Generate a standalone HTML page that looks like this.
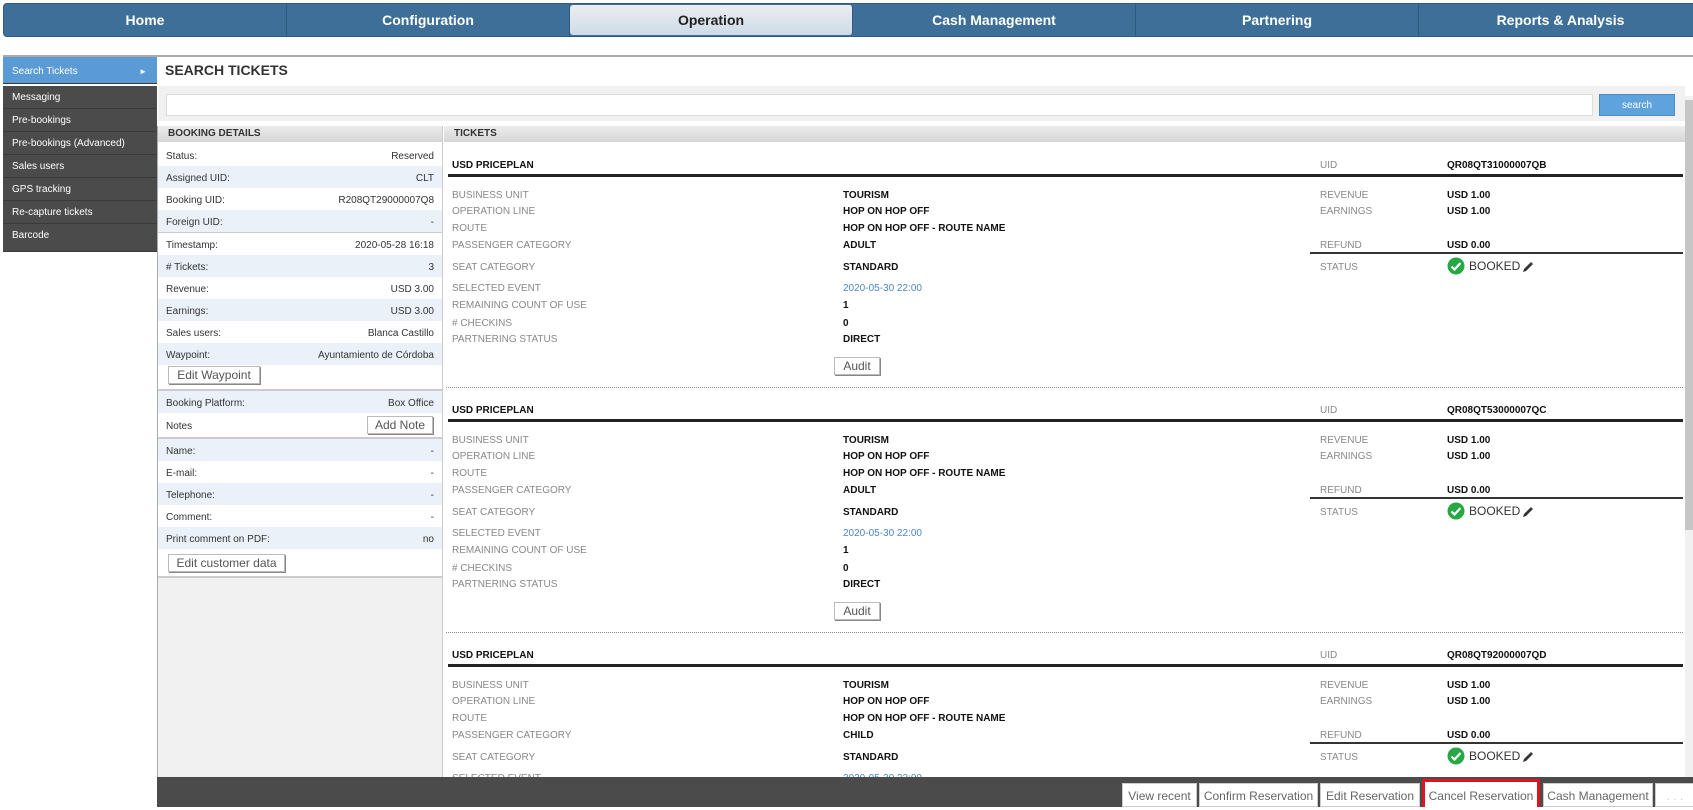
<!DOCTYPE html>
<html><head><meta charset="utf-8"><style>
*{box-sizing:border-box;margin:0;padding:0}
body{width:1693px;height:807px;overflow:hidden;background:#fff;font-family:"Liberation Sans",sans-serif;position:relative;color:#222}
.a{position:absolute;white-space:nowrap}
.nav{position:absolute;top:3px;left:3px;width:1700px;height:34px;background:#3d6f99;border-radius:4px;border:1px solid #2f5a80}
.tab{position:absolute;top:0;height:32px;line-height:32px;text-align:center;color:#fff;font-weight:bold;font-size:14px;border-right:1px solid #2f5a80}
.tab.on{background:linear-gradient(#eceef0,#ccdbe8);color:#222;border-radius:3px;top:1px;height:30px;line-height:30px}
.side{position:absolute;left:3px;width:154px;height:23px;line-height:23px;background:#4b4b4b;color:#fff;font-size:10px;padding-left:9px;border-bottom:1px solid #3a3a3a}
.br{position:absolute;left:158px;width:284px;height:22px;line-height:26px;font-size:10px;color:#333;padding:0 8px}
.br span{float:right}
.bl{background:#eaf1f8}
.btn{position:absolute;background:#fff;border:1px solid #bbb;box-shadow:1px 1px 0 #888;font-size:12px;color:#555;text-align:center}
.l{position:absolute;font-size:10px;color:#888;white-space:nowrap}
.v{position:absolute;font-size:10px;color:#111;font-weight:bold;white-space:nowrap}
.hdr{position:absolute;top:126px;height:16px;line-height:16px;background:linear-gradient(#ececec,#d6d6d6);font-size:10px;font-weight:bold;color:#333;padding-left:10px}
.fb{position:absolute;top:783px;height:24px;line-height:24px;background:#fff;font-size:12px;color:#666;text-align:center;border:1px solid #ccc}
</style></head><body>
<div class="nav">
<div class="tab" style="left:0;width:283px">Home</div>
<div class="tab" style="left:283px;width:283px">Configuration</div>
<div class="tab on" style="left:566px;width:283px">Operation</div>
<div class="tab" style="left:849px;width:283px">Cash Management</div>
<div class="tab" style="left:1132px;width:283px">Partnering</div>
<div class="tab" style="left:1415px;width:283px;border:none">Reports &amp; Analysis</div>
</div>
<div class="a" style="top:55px;left:3px;width:1690px;height:2px;background:#aaa"></div>
<div class="side" style="top:57px;height:27px;line-height:29px;background:#5b9bd5">Search Tickets<span style="position:absolute;right:10px;font-size:8px">&#9658;</span></div>
<div class="side" style="top:86px">Messaging</div>
<div class="side" style="top:109px">Pre-bookings</div>
<div class="side" style="top:132px">Pre-bookings (Advanced)</div>
<div class="side" style="top:155px">Sales users</div>
<div class="side" style="top:178px">GPS tracking</div>
<div class="side" style="top:201px">Re-capture tickets</div>
<div class="side" style="top:224px;height:28px">Barcode</div>
<div class="a" style="top:62px;left:165px;font-size:14px;font-weight:bold;color:#333">SEARCH TICKETS</div>
<div class="a" style="top:86px;left:158px;width:1527px;height:35px;background:#f1f1f1"></div>
<div class="a" style="top:94px;left:166px;width:1427px;height:22px;background:#fff;border:1px solid #ddd"></div>
<div class="a" style="top:94px;left:1599px;width:76px;height:22px;background:#5fa3dc;color:#fff;font-size:10px;text-align:center;line-height:22px;border:1px solid #4b8cc4">search</div>
<div class="a" style="top:96px;left:1685px;width:8px;height:681px;background:#f1f1f1"></div>
<div class="a" style="top:100px;left:1685px;width:8px;height:430px;background:#c6c6c6"></div>
<!-- booking panel -->
<div class="a" style="top:126px;left:157px;width:286px;height:651px;background:#f1f1f1;border-left:1px solid #aaa;border-right:1px solid #ccc"></div>
<div class="hdr" style="left:158px;width:284px">BOOKING DETAILS</div>
<div class="a" style="top:142px;left:158px;width:284px;height:436px;background:#fff;border-bottom:2px solid #ccc"></div>
<div class="br" style="top:144px">Status:<span>Reserved</span></div>
<div class="br bl" style="top:166px">Assigned UID:<span>CLT</span></div>
<div class="br" style="top:188px">Booking UID:<span>R208QT29000007Q8</span></div>
<div class="br bl" style="top:210px">Foreign UID:<span>-</span></div>
<div class="a" style="top:232px;left:158px;width:284px;height:1px;background:#ccc"></div>
<div class="br" style="top:233px">Timestamp:<span>2020-05-28 16:18</span></div>
<div class="br bl" style="top:255px"># Tickets:<span>3</span></div>
<div class="br" style="top:277px">Revenue:<span>USD 3.00</span></div>
<div class="br bl" style="top:299px">Earnings:<span>USD 3.00</span></div>
<div class="br" style="top:321px">Sales users:<span>Blanca Castillo</span></div>
<div class="br bl" style="top:343px">Waypoint:<span>Ayuntamiento de Córdoba</span></div>
<div class="btn" style="top:366px;left:168px;width:92px;height:18px;line-height:16px">Edit Waypoint</div>
<div class="a" style="top:389px;left:158px;width:284px;height:2px;background:#ccc"></div>
<div class="br bl" style="top:391px">Booking Platform:<span>Box Office</span></div>
<div class="br" style="top:413px;height:24px;line-height:28px">Notes</div>
<div class="btn" style="top:416px;left:367px;width:66px;height:18px;line-height:16px">Add Note</div>
<div class="a" style="top:437px;left:158px;width:284px;height:2px;background:#ccc"></div>
<div class="br bl" style="top:439px">Name:<span>-</span></div>
<div class="br" style="top:461px">E-mail:<span>-</span></div>
<div class="br bl" style="top:483px">Telephone:<span>-</span></div>
<div class="br" style="top:505px">Comment:<span>-</span></div>
<div class="br bl" style="top:527px">Print comment on PDF:<span>no</span></div>
<div class="btn" style="top:554px;left:168px;width:117px;height:18px;line-height:16px">Edit customer data</div>
<!-- tickets -->
<div class="hdr" style="left:444px;width:1241px">TICKETS</div>
<div class="a" style="top:777px;left:157px;width:1536px;height:30px;background:#4b4b4b"></div>
<div class="fb" style="left:1122px;width:75px">View recent</div>
<div class="fb" style="left:1199px;width:119px">Confirm Reservation</div>
<div class="fb" style="left:1320px;width:100px">Edit Reservation</div>
<div class="fb" style="left:1422px;width:118px;top:779px;height:28px;line-height:28px;border:3px solid #e0141e;border-bottom:none">Cancel Reservation</div>
<div class="fb" style="left:1543px;width:110px">Cash Management</div>
<div class="fb" style="left:1655px;width:40px;color:#ccc">. . .</div>

<div style="position:absolute;top:158px;left:0;width:1693px;height:245px">
<div class="v" style="top:2px;left:452px">USD PRICEPLAN</div>
<div class="l" style="top:2px;left:1320px">UID</div><div class="v" style="top:2px;left:1447px">QR08QT31000007QB</div>
<div class="a" style="top:16px;left:448px;width:1235px;height:3px;background:#222"></div>
<div class="l" style="top:32px;left:452px">BUSINESS UNIT</div><div class="v" style="top:32px;left:843px">TOURISM</div>
<div class="l" style="top:48px;left:452px">OPERATION LINE</div><div class="v" style="top:48px;left:843px">HOP ON HOP OFF</div>
<div class="l" style="top:65px;left:452px">ROUTE</div><div class="v" style="top:65px;left:843px">HOP ON HOP OFF - ROUTE NAME</div>
<div class="l" style="top:82px;left:452px">PASSENGER CATEGORY</div><div class="v" style="top:82px;left:843px">ADULT</div>
<div class="l" style="top:104px;left:452px">SEAT CATEGORY</div><div class="v" style="top:104px;left:843px">STANDARD</div>
<div class="l" style="top:125px;left:452px">SELECTED EVENT</div><div class="v" style="top:125px;left:843px;color:#4a86c5;font-weight:normal">2020-05-30 22:00</div>
<div class="l" style="top:142px;left:452px">REMAINING COUNT OF USE</div><div class="v" style="top:142px;left:843px">1</div>
<div class="l" style="top:160px;left:452px"># CHECKINS</div><div class="v" style="top:160px;left:843px">0</div>
<div class="l" style="top:176px;left:452px">PARTNERING STATUS</div><div class="v" style="top:176px;left:843px">DIRECT</div>
<div class="l" style="top:32px;left:1320px">REVENUE</div><div class="v" style="top:32px;left:1447px">USD 1.00</div>
<div class="l" style="top:48px;left:1320px">EARNINGS</div><div class="v" style="top:48px;left:1447px">USD 1.00</div>
<div class="l" style="top:82px;left:1320px">REFUND</div><div class="v" style="top:82px;left:1447px">USD 0.00</div>
<div class="a" style="top:94px;left:1310px;height:2px;background:#333;width:373px"></div>
<div class="l" style="top:104px;left:1320px">STATUS</div>
<div class="a" style="top:99px;left:1447px"><svg width="18" height="18"><circle cx="9" cy="9" r="8.5" fill="#27a844"/><path d="M4.5 9.5l3 3 6-6.5" stroke="#fff" stroke-width="2.2" fill="none"/></svg></div>
<div class="a" style="top:101px;left:1469px;font-size:12px;color:#333">BOOKED</div>
<div class="a" style="top:102px;left:1522px"><svg width="12" height="12"><path d="M1 11l1-3 6-6 2 2-6 6z" fill="#333"/><path d="M9 1l2 2-1 1-2-2z" fill="#333"/></svg></div>
<div class="btn" style="top:199px;left:834px;width:46px;height:18px;line-height:16px">Audit</div>
<div class="a" style="top:229px;left:446px;width:1237px;border-top:1px dotted #888"></div>
</div>
<div style="position:absolute;top:403px;left:0;width:1693px;height:245px">
<div class="v" style="top:2px;left:452px">USD PRICEPLAN</div>
<div class="l" style="top:2px;left:1320px">UID</div><div class="v" style="top:2px;left:1447px">QR08QT53000007QC</div>
<div class="a" style="top:16px;left:448px;width:1235px;height:3px;background:#222"></div>
<div class="l" style="top:32px;left:452px">BUSINESS UNIT</div><div class="v" style="top:32px;left:843px">TOURISM</div>
<div class="l" style="top:48px;left:452px">OPERATION LINE</div><div class="v" style="top:48px;left:843px">HOP ON HOP OFF</div>
<div class="l" style="top:65px;left:452px">ROUTE</div><div class="v" style="top:65px;left:843px">HOP ON HOP OFF - ROUTE NAME</div>
<div class="l" style="top:82px;left:452px">PASSENGER CATEGORY</div><div class="v" style="top:82px;left:843px">ADULT</div>
<div class="l" style="top:104px;left:452px">SEAT CATEGORY</div><div class="v" style="top:104px;left:843px">STANDARD</div>
<div class="l" style="top:125px;left:452px">SELECTED EVENT</div><div class="v" style="top:125px;left:843px;color:#4a86c5;font-weight:normal">2020-05-30 22:00</div>
<div class="l" style="top:142px;left:452px">REMAINING COUNT OF USE</div><div class="v" style="top:142px;left:843px">1</div>
<div class="l" style="top:160px;left:452px"># CHECKINS</div><div class="v" style="top:160px;left:843px">0</div>
<div class="l" style="top:176px;left:452px">PARTNERING STATUS</div><div class="v" style="top:176px;left:843px">DIRECT</div>
<div class="l" style="top:32px;left:1320px">REVENUE</div><div class="v" style="top:32px;left:1447px">USD 1.00</div>
<div class="l" style="top:48px;left:1320px">EARNINGS</div><div class="v" style="top:48px;left:1447px">USD 1.00</div>
<div class="l" style="top:82px;left:1320px">REFUND</div><div class="v" style="top:82px;left:1447px">USD 0.00</div>
<div class="a" style="top:94px;left:1310px;height:2px;background:#333;width:373px"></div>
<div class="l" style="top:104px;left:1320px">STATUS</div>
<div class="a" style="top:99px;left:1447px"><svg width="18" height="18"><circle cx="9" cy="9" r="8.5" fill="#27a844"/><path d="M4.5 9.5l3 3 6-6.5" stroke="#fff" stroke-width="2.2" fill="none"/></svg></div>
<div class="a" style="top:101px;left:1469px;font-size:12px;color:#333">BOOKED</div>
<div class="a" style="top:102px;left:1522px"><svg width="12" height="12"><path d="M1 11l1-3 6-6 2 2-6 6z" fill="#333"/><path d="M9 1l2 2-1 1-2-2z" fill="#333"/></svg></div>
<div class="btn" style="top:199px;left:834px;width:46px;height:18px;line-height:16px">Audit</div>
<div class="a" style="top:229px;left:446px;width:1237px;border-top:1px dotted #888"></div>
</div>
<div style="position:absolute;top:648px;left:0;width:1693px;height:129px;overflow:hidden">
<div class="v" style="top:2px;left:452px">USD PRICEPLAN</div>
<div class="l" style="top:2px;left:1320px">UID</div><div class="v" style="top:2px;left:1447px">QR08QT92000007QD</div>
<div class="a" style="top:16px;left:448px;width:1235px;height:3px;background:#222"></div>
<div class="l" style="top:32px;left:452px">BUSINESS UNIT</div><div class="v" style="top:32px;left:843px">TOURISM</div>
<div class="l" style="top:48px;left:452px">OPERATION LINE</div><div class="v" style="top:48px;left:843px">HOP ON HOP OFF</div>
<div class="l" style="top:65px;left:452px">ROUTE</div><div class="v" style="top:65px;left:843px">HOP ON HOP OFF - ROUTE NAME</div>
<div class="l" style="top:82px;left:452px">PASSENGER CATEGORY</div><div class="v" style="top:82px;left:843px">CHILD</div>
<div class="l" style="top:104px;left:452px">SEAT CATEGORY</div><div class="v" style="top:104px;left:843px">STANDARD</div>
<div class="l" style="top:125px;left:452px">SELECTED EVENT</div><div class="v" style="top:125px;left:843px;color:#4a86c5;font-weight:normal">2020-05-30 22:00</div>
<div class="l" style="top:32px;left:1320px">REVENUE</div><div class="v" style="top:32px;left:1447px">USD 1.00</div>
<div class="l" style="top:48px;left:1320px">EARNINGS</div><div class="v" style="top:48px;left:1447px">USD 1.00</div>
<div class="l" style="top:82px;left:1320px">REFUND</div><div class="v" style="top:82px;left:1447px">USD 0.00</div>
<div class="a" style="top:94px;left:1310px;height:2px;background:#333;width:373px"></div>
<div class="l" style="top:104px;left:1320px">STATUS</div>
<div class="a" style="top:99px;left:1447px"><svg width="18" height="18"><circle cx="9" cy="9" r="8.5" fill="#27a844"/><path d="M4.5 9.5l3 3 6-6.5" stroke="#fff" stroke-width="2.2" fill="none"/></svg></div>
<div class="a" style="top:101px;left:1469px;font-size:12px;color:#333">BOOKED</div>
<div class="a" style="top:102px;left:1522px"><svg width="12" height="12"><path d="M1 11l1-3 6-6 2 2-6 6z" fill="#333"/><path d="M9 1l2 2-1 1-2-2z" fill="#333"/></svg></div>
</div>
</body></html>
